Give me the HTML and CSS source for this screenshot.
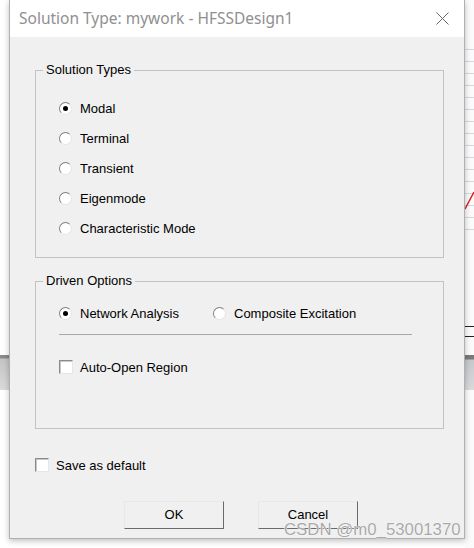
FILE: index.html
```html
<!DOCTYPE html>
<html>
<head>
<meta charset="utf-8">
<link rel="stylesheet" href="styles.css">
</head>
<body>
<div class="desktop">
  <div class="bg-left-bar"></div>
  <div class="bg-right">
    <div class="grid-lines"></div>
    <svg class="red-line" width="9" height="20" viewBox="0 0 9 20"><path d="M0 19 L9 2" stroke="#d62020" stroke-width="1.5" fill="none"/></svg>
    <div class="black-line l1"></div>
    <div class="black-line l2"></div>
    <div class="bg-right-bar"></div>
  </div>

  <div class="dialog">
    <div class="titlebar">
      <span class="title">Solution Type: mywork - HFSSDesign1</span>
      <svg class="close" width="13" height="13" viewBox="0 0 13 13"><path d="M0.5 0.5 L12.5 12.5 M12.5 0.5 L0.5 12.5" stroke="#666" stroke-width="1" fill="none"/></svg>
    </div>
    <div class="content">
      <div class="group g1">
        <span class="legend">Solution Types</span>
        <div class="row"><span class="radio checked"></span><span>Modal</span></div>
        <div class="row"><span class="radio"></span><span>Terminal</span></div>
        <div class="row"><span class="radio"></span><span>Transient</span></div>
        <div class="row"><span class="radio"></span><span>Eigenmode</span></div>
        <div class="row"><span class="radio"></span><span>Characteristic Mode</span></div>
      </div>

      <div class="group g2">
        <span class="legend">Driven Options</span>
        <div class="row">
          <div class="opt first"><span class="radio checked"></span><span>Network Analysis</span></div>
          <div class="opt"><span class="radio"></span><span>Composite Excitation</span></div>
        </div>
        <div class="sep"></div>
        <div class="row auto"><span class="check"></span><span>Auto-Open Region</span></div>
      </div>

      <div class="row save"><span class="check"></span><span>Save as default</span></div>

      <div class="buttons">
        <div class="btn">OK</div>
        <div class="btn">Cancel</div>
      </div>
    </div>
  </div>
  <div class="watermark">CSDN @m0_53001370</div>
</div>
</body>
</html>
```
FILE: styles.css
```css
html, body {
  margin: 0;
  padding: 0;
  background: #ffffff;
}
body {
  width: 474px;
  height: 548px;
  overflow: hidden;
  font-family: "Liberation Sans", Arial, sans-serif;
  font-size: 13px;
  color: #000;
}
.desktop {
  position: relative;
  width: 474px;
  height: 548px;
  padding-left: 9px;
  box-sizing: border-box;
}
.bg-left-bar {
  position: absolute;
  left: 0;
  top: 355px;
  width: 10px;
  height: 35px;
  background: linear-gradient(#8a8a8a 0, #8a8a8a 3px, #c4c4c4 4px, #dadada 100%);
}
.bg-right {
  position: absolute;
  left: 465px;
  top: 0;
  width: 9px;
  height: 548px;
  background: #fbfbfb;
}
.grid-lines {
  position: absolute;
  left: 0;
  top: 38px;
  width: 9px;
  height: 200px;
  background: repeating-linear-gradient(#fbfbfb 0, #fbfbfb 11px, #d6d6de 11px, #d6d6de 12px);
}
.red-line {
  position: absolute;
  left: 0;
  top: 190px;
}
.black-line {
  position: absolute;
  left: 0;
  width: 9px;
  height: 1px;
  background: #222;
}
.black-line.l1 { top: 326px; }
.black-line.l2 { top: 336px; }
.bg-right-bar {
  position: absolute;
  left: 0;
  top: 355px;
  width: 9px;
  height: 35px;
  background: linear-gradient(#7a7a7a 0, #7a7a7a 4px, #c6c8cc 5px, #d8dadc 100%);
}
.dialog {
  position: relative;
  width: 456px;
  height: 539px;
  box-sizing: border-box;
  border: 1px solid #b0b0b0;
  border-top: none;
  background: #f0f0f0;
  box-shadow: 0 2px 6px rgba(0, 0, 0, 0.25);
}
.titlebar {
  height: 37px;
  background: #ffffff;
  display: flex;
  align-items: center;
  padding-left: 9px;
  padding-right: 15px;
}
.title {
  font-family: "Noto Sans", "Open Sans", sans-serif;
  font-size: 15.5px;
  color: #909090;
  flex: 1;
  padding-bottom: 1px;
}
.close {
  display: block;
  margin-top: -1px;
}
.content {
  padding: 33px 0 0 25px;
}
.group {
  position: relative;
  width: 409px;
  box-sizing: border-box;
  border: 1px solid #c2c2c2;
  padding-left: 23px;
}
.legend {
  position: absolute;
  left: 7px;
  top: -9px;
  padding: 0 3px;
  background: #f0f0f0;
  line-height: 16px;
}
.g1 {
  padding-top: 22px;
  padding-bottom: 14px;
}
.g2 {
  margin-top: 23px;
  padding-top: 16px;
  padding-bottom: 46px;
}
.row {
  height: 30px;
  display: flex;
  align-items: center;
}
.opt {
  display: flex;
  align-items: center;
}
.opt.first {
  width: 154px;
}
.radio {
  width: 13px;
  height: 13px;
  box-sizing: border-box;
  border-radius: 50%;
  background: #fff;
  border: 1px solid;
  border-color: #808080 #e4e4e4 #e4e4e4 #808080;
  margin-right: 8px;
  position: relative;
  flex: none;
}
.radio.checked::after {
  content: "";
  position: absolute;
  left: 3px;
  top: 3px;
  width: 5px;
  height: 5px;
  border-radius: 50%;
  background: #000;
}
.sep {
  width: 353px;
  height: 1px;
  background: #a8a8a8;
  margin-top: 6px;
}
.auto {
  margin-top: 17px;
}
.check {
  width: 14px;
  height: 14px;
  box-sizing: border-box;
  background: #fff;
  border: 1px solid;
  border-color: #8a8a8a #e6e6e6 #e6e6e6 #8a8a8a;
  box-shadow: inset 1px 1px 0 #c8c8c8;
  margin-right: 7px;
  flex: none;
}
.save {
  margin-top: 21px;
}
.buttons {
  margin-top: 21px;
  padding-left: 89px;
  display: flex;
  gap: 34px;
}
.btn {
  width: 100px;
  height: 28px;
  box-sizing: border-box;
  border: 1px solid;
  border-color: #e8e8e8 #6a6a6a #6a6a6a #e8e8e8;
  background: #f0f0f0;
  display: flex;
  align-items: center;
  justify-content: center;
  padding-bottom: 2px;
}
.watermark {
  position: absolute;
  left: 284px;
  top: 522px;
  font-family: "Liberation Sans", Arial, sans-serif;
  font-size: 16.8px;
  line-height: 16px;
  color: #a9a9a9;
  text-shadow: 0 0 1px #fff, 0 0 1px #fff;
  white-space: nowrap;
}
```
